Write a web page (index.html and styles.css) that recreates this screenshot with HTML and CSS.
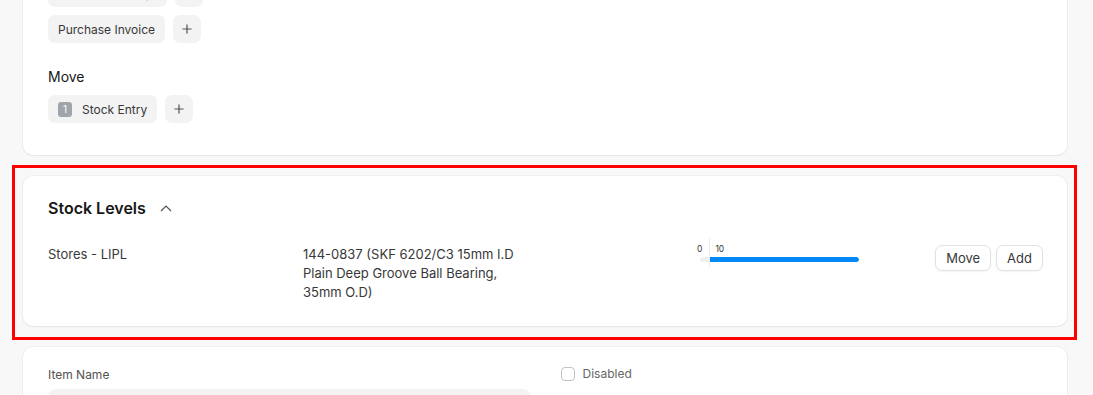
FILE: index.html
```html
<!DOCTYPE html>
<html lang="en">
<head>
    <meta charset="UTF-8">
    <meta name="viewport" content="width=device-width, initial-scale=1.0">
    <title>Item - Stock Levels</title>
    <link rel="stylesheet" href="styles.css">
</head>
<body>
    <div class="page">

        <!-- Connections -->
        <div class="card card-links">
            <div class="link-group">
                <div class="group-label">Buy</div>
                <div class="pill-row">
                    <span class="pill">Purchase Receipt</span>
                    <span class="pill pill-add"><svg width="10" height="10" viewBox="0 0 10 10"><path d="M5 0.5v9M0.5 5h9" /></svg></span>
                </div>
                <div class="pill-row">
                    <span class="pill">Purchase Invoice</span>
                    <span class="pill pill-add"><svg width="10" height="10" viewBox="0 0 10 10"><path d="M5 0.5v9M0.5 5h9" /></svg></span>
                </div>
            </div>

            <div class="link-group">
                <div class="group-label">Move</div>
                <div class="pill-row">
                    <span class="pill"><span class="count">1</span>Stock Entry</span>
                    <span class="pill pill-add"><svg width="10" height="10" viewBox="0 0 10 10"><path d="M5 0.5v9M0.5 5h9" /></svg></span>
                </div>
            </div>
        </div>

        <!-- Stock levels, highlighted -->
        <div class="highlight">
            <div class="card card-stock">
                <div class="section-head">
                    <span class="section-title">Stock Levels</span>
                    <svg class="chevron" width="12" height="7" viewBox="0 0 12 7"><path d="M1 6L6 1L11 6" /></svg>
                </div>

                <div class="stock-row">
                    <div class="warehouse">Stores - LIPL</div>
                    <div class="item-desc">144-0837 (SKF 6202/C3 15mm I.D Plain Deep Groove Ball Bearing, 35mm O.D)</div>
                    <div class="bar-col">
                        <div class="bar-labels">
                            <span>0</span>
                            <span>10</span>
                        </div>
                        <div class="bar-track">
                            <div class="bar-fill" style="width: 149px;"></div>
                        </div>
                        <div class="bar-marker"></div>
                    </div>
                    <div class="stock-actions">
                        <button class="btn">Move</button>
                        <button class="btn">Add</button>
                    </div>
                </div>
            </div>
        </div>

        <!-- Details -->
        <div class="card card-form">
            <div class="form-col">
                <div class="field-label">Item Name</div>
                <div class="field-input"></div>
            </div>
            <div class="form-col">
                <label class="check">
                    <span class="check-box"></span>
                    <span>Disabled</span>
                </label>
            </div>
        </div>

    </div>
</body>
</html>
```

FILE: styles.css
```css
* {
    box-sizing: border-box;
    margin: 0;
    padding: 0;
}

html, body {
    height: 100%;
    overflow: hidden;
}

body {
    font-family: Inter, "Noto Sans", sans-serif;
    background-color: #f8f8f8;
    color: #383838;
}

.page {
    padding: 0 26px 0 23px;
}

.card {
    background: #fff;
    border-radius: 10px;
    box-shadow: 0 0 0 1px rgba(0, 0, 0, 0.035), 0 1px 2px rgba(0, 0, 0, 0.04);
}

/* connections card */
.card-links {
    margin-top: -69px;
    padding: 20px 25px 32px;
}

.link-group + .link-group {
    margin-top: 24px;
}

.group-label {
    font-size: 14px;
    line-height: 20px;
    color: #171717;
    margin-bottom: 8px;
}

.pill-row {
    display: flex;
    gap: 8px;
}

.pill-row + .pill-row {
    margin-top: 8px;
}

.pill {
    display: inline-flex;
    align-items: center;
    height: 28px;
    padding: 0 10px;
    font-size: 12px;
    color: #383838;
    background: #f3f3f3;
    border-radius: 7px;
}

.pill-add {
    width: 28px;
    padding: 0;
    justify-content: center;
}

.pill-add svg path {
    stroke: #525252;
    stroke-width: 1.2;
    fill: none;
}

.count {
    display: inline-flex;
    align-items: center;
    justify-content: center;
    width: 14px;
    height: 15px;
    margin-right: 10px;
    font-size: 10px;
    color: #fff;
    background: #a0a5ab;
    border-radius: 3px;
}

/* red highlight */
.highlight {
    margin: 10px -10px 7px -11px;
    padding: 8px 7px 11px 8px;
    border: 3px solid #ff0000;
}

.card-stock {
    padding: 20px 24px 24px 25px;
}

.section-head {
    display: flex;
    align-items: center;
    height: 24px;
}

.section-title {
    font-size: 16px;
    font-weight: 600;
    color: #171717;
}

.chevron {
    margin-left: 14px;
}

.chevron path {
    stroke: #525252;
    stroke-width: 1.2;
    fill: none;
}

.stock-row {
    display: grid;
    grid-template-columns: 255px 394px 162px 1fr;
    align-items: start;
    margin-top: 25px;
    font-size: 13px;
    line-height: 19px;
}

.item-desc {
    max-width: 224px;
}

.bar-col {
    position: relative;
}

.bar-labels {
    display: flex;
    gap: 13px;
    font-size: 8.5px;
    line-height: 8px;
    color: #383838;
}

.bar-track {
    width: 159px;
    height: 5px;
    margin: 4px 0 0 3px;
    background: #f0f0f0;
    border-radius: 3px;
    overflow: hidden;
}

.bar-fill {
    height: 100%;
    margin-left: 10px;
    background: #0289f7;
    border-radius: 0 3px 3px 0;
}

.bar-marker {
    position: absolute;
    left: 12px;
    top: -7px;
    width: 1px;
    height: 29px;
    background: #ededed;
}

.stock-actions {
    display: flex;
    justify-content: flex-end;
    gap: 5px;
}

.btn {
    height: 26px;
    padding: 0 10px;
    font-family: inherit;
    font-size: 13px;
    color: #383838;
    background: #fff;
    border: 1px solid #e2e2e2;
    border-radius: 7px;
    box-shadow: 0 1px 2px rgba(0, 0, 0, 0.05);
    cursor: pointer;
}

/* details card */
.card-form {
    display: grid;
    grid-template-columns: 1fr 1fr;
    gap: 30px;
    height: 120px;
    padding: 20px 24px 0 25px;
}

.field-label {
    font-size: 12px;
    line-height: 16px;
    color: #525252;
    margin-bottom: 6px;
}

.field-input {
    height: 36px;
    background: #f3f3f3;
    border-radius: 8px;
}

.check {
    display: flex;
    align-items: center;
    gap: 8px;
    font-size: 12px;
    line-height: 14px;
    color: #666;
}

.check-box {
    width: 14px;
    height: 14px;
    border: 1px solid #c4c4c4;
    border-radius: 4px;
    background: #fff;
}
```
